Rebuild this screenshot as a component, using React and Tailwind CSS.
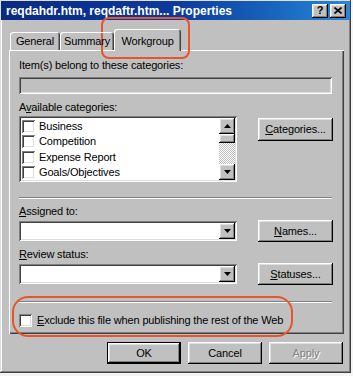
import React from "react";

const raised =
  "bg-[#c0c0c0] shadow-[inset_-1px_-1px_#000,inset_1px_1px_#fff,inset_-2px_-2px_#808080,inset_2px_2px_#dfdfdf]";
const sunken =
  "shadow-[inset_1px_1px_#808080,inset_-1px_-1px_#fff,inset_2px_2px_#404040,inset_-2px_-2px_#dfdfdf]";

function U({ children }) {
  return <span className="underline underline-offset-[1px]">{children}</span>;
}

function Btn({ children, className = "", isDefault = false, disabled = false }) {
  return (
    <div
      className={
        "flex items-center justify-center text-[11px] " +
        (isDefault
          ? "bg-[#c0c0c0] shadow-[inset_1px_1px_#000,inset_-1px_-1px_#000,inset_-2px_-2px_#000,inset_2px_2px_#fff,inset_-3px_-3px_#808080,inset_3px_3px_#dfdfdf] "
          : raised + " ") +
        (disabled ? "text-[#808080] [text-shadow:1px_1px_0_#fff] " : "text-black ") +
        className
      }
    >
      {children}
    </div>
  );
}

function Arrow({ down }) {
  return (
    <svg width="7" height="4" viewBox="0 0 7 4">
      {down ? (
        <polygon points="0,0 7,0 3.5,4" fill="#000" />
      ) : (
        <polygon points="0,4 7,4 3.5,0" fill="#000" />
      )}
    </svg>
  );
}

function Check({ className = "" }) {
  return <div className={"w-[13px] h-[13px] bg-white shrink-0 " + sunken + " " + className} />;
}

function Combo() {
  return (
    <div className={"w-[218px] h-[20px] bg-white flex justify-end p-[2px] " + sunken}>
      <div className={"w-[16px] h-[16px] flex items-center justify-center " + raised}>
        <Arrow down />
      </div>
    </div>
  );
}

export default function App() {
  const cats = ["Business", "Competition", "Expense Report", "Goals/Objectives"];
  return (
    <div
      className="w-[353px] h-[376px] bg-[#f4f4f4] overflow-hidden relative tracking-[-0.15px]"
      style={{ fontFamily: '"Liberation Sans", Arial, sans-serif' }}
    >
      <div
        className={
          "w-[351px] h-[373px] flex flex-col bg-[#c0c0c0] shadow-[inset_-1px_-1px_#404040,inset_1px_1px_#dfdfdf,inset_-2px_-2px_#808080,inset_2px_2px_#fff]"
        }
      >
        {/* title bar */}
        <div className="mt-[1px] mx-[1px] h-[19px] bg-gradient-to-r from-[#0a2a82] via-[#0c3a9c] to-[#2a86d8] flex items-center pl-[5px] pr-[4px]">
          <div className="text-white font-bold text-[12px] leading-none flex-1 tracking-normal">
            reqdahdr.htm, reqdaftr.htm... Properties
          </div>
          <div className={"w-[16px] h-[14px] flex items-center justify-center text-[11px] font-bold leading-none " + raised}>
            ?
          </div>
          <div className={"ml-[2px] w-[16px] h-[14px] flex items-center justify-center " + raised}>
            <svg width="8" height="7" viewBox="0 0 8 7">
              <path d="M0.5 0.5 L7.5 6.5 M7.5 0.5 L0.5 6.5" stroke="#000" strokeWidth="1.6" />
            </svg>
          </div>
        </div>

        {/* tabs */}
        <div className="mt-[9px] ml-[10px] h-[21px] flex items-end relative z-10">
          <div className="w-[50px] h-[18px] rounded-t-[3px] shadow-[inset_1px_1px_#fff,inset_-1px_0_#404040,inset_-2px_0_#808080] flex items-center justify-center text-[11px]">
            General
          </div>
          <div className="w-[54px] h-[18px] rounded-t-[3px] shadow-[inset_1px_1px_#fff,inset_-1px_0_#404040,inset_-2px_0_#808080] flex items-center justify-center text-[11px]">
            Summary
          </div>
          <div className="w-[67px] h-[22px] -mb-[1px] bg-[#c0c0c0] rounded-t-[3px] shadow-[inset_1px_1px_#fff,inset_-1px_0_#404040,inset_-2px_0_#808080] flex items-start pt-[4px] justify-center text-[11px]">
            Workgroup
          </div>
        </div>

        {/* panel */}
        <div className="ml-[9px] w-[335px] h-[284px] flex flex-col px-[10px] shadow-[inset_1px_1px_#fff,inset_-1px_-1px_#404040,inset_-2px_-2px_#808080]">
          <div className="mt-[9px] h-[13px] text-[11px] leading-[13px]">Item(s) belong to these categories:</div>
          <div className={"mt-[5px] w-[313px] h-[17px] bg-[#c0c0c0] " + sunken} />
          <div className="mt-[7px] h-[13px] text-[11px] leading-[13px]">
            A<U>v</U>ailable categories:
          </div>
          <div className="mt-[2px] flex">
            <div className={"w-[218px] h-[66px] bg-white flex p-[2px] " + sunken}>
              <div className="flex-1 flex flex-col pt-[1px]">
                {cats.map((c) => (
                  <div key={c} className="h-[16px] flex items-center pl-[1px]">
                    <Check />
                    <span className="ml-[4px] text-[11px] leading-none">{c}</span>
                  </div>
                ))}
              </div>
              <div className="w-[16px] flex flex-col">
                <div className={"h-[16px] flex items-center justify-center " + raised}>
                  <Arrow />
                </div>
                <div className={"h-[9px] " + raised} />
                <div className="flex-1 bg-[repeating-conic-gradient(#fff_0_25%,#c0c0c0_0_50%)] bg-[length:2px_2px]" />
                <div className={"h-[16px] flex items-center justify-center " + raised}>
                  <Arrow down />
                </div>
              </div>
            </div>
            <Btn className="ml-[21px] mt-[2px] w-[75px] h-[23px]">
              <span>
                <U>C</U>ategories...
              </span>
            </Btn>
          </div>
          <div className="mt-[15px] w-[313px] h-[2px] shadow-[inset_0_1px_#808080,inset_0_-1px_#fff]" />
          <div className="mt-[6px] h-[13px] text-[11px] leading-[13px]">
            <U>A</U>ssigned to:
          </div>
          <div className="mt-[2px] flex items-center">
            <Combo />
            <Btn className="ml-[21px] w-[75px] h-[22px]">
              <span>
                <U>N</U>ames...
              </span>
            </Btn>
          </div>
          <div className="mt-[6px] h-[13px] text-[11px] leading-[13px]">
            <U>R</U>eview status:
          </div>
          <div className="mt-[2px] flex items-center">
            <Combo />
            <Btn className="ml-[21px] w-[75px] h-[22px]">
              <span>
                <U>S</U>tatuses...
              </span>
            </Btn>
          </div>
          <div className="mt-[16px] w-[313px] h-[2px] shadow-[inset_0_1px_#808080,inset_0_-1px_#fff]" />
          <div className="mt-[11px] flex items-center">
            <Check />
            <span className="ml-[5px] text-[11px] leading-none">
              <U>E</U>xclude this file when publishing the rest of the Web
            </span>
          </div>
        </div>

        {/* bottom buttons */}
        <div className="mt-[8px] ml-[107px] flex gap-[7px]">
          <Btn isDefault className="w-[74px] h-[22px]">OK</Btn>
          <Btn className="w-[74px] h-[22px]">Cancel</Btn>
          <Btn disabled className="w-[74px] h-[22px]">Apply</Btn>
        </div>
      </div>

      {/* red highlights */}
      <div className="absolute left-[101px] top-[17px] w-[89px] h-[42px] border-2 border-[#e8552a] rounded-[8px] pointer-events-none" />
      <div className="absolute left-[12px] top-[296px] w-[281px] h-[41px] border-2 border-[#e8552a] rounded-[16px] pointer-events-none" />
    </div>
  );
}
